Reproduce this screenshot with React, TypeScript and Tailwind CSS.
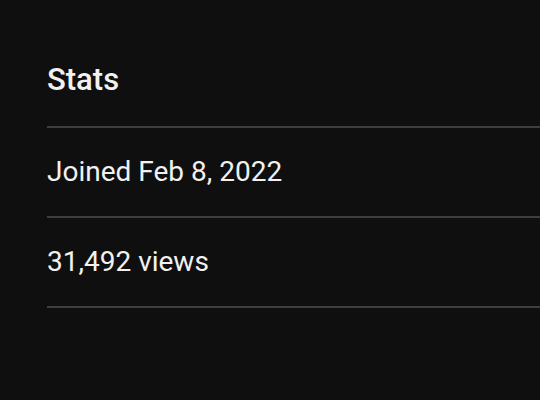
const rows = ["Joined Feb 8, 2022", "31,492 views"];

const App = () => {
  return (
    <div className="min-h-[400px] w-full bg-[#0f0f0f] pl-[47px] font-['Roboto',sans-serif] text-[#f1f1f1] overflow-hidden">
      <div className="pt-[60px] pb-[26px] border-b-2 border-[#3e3e3e]">
        <h2 className="text-[31px] leading-[40px] font-medium">Stats</h2>
      </div>
      {rows.map((row) => (
        <div
          key={row}
          className="pt-[26px] pb-[26px] border-b-2 border-[#3e3e3e]"
        >
          <p className="text-[28px] leading-[36px]">{row}</p>
        </div>
      ))}
    </div>
  );
};

export default App;
